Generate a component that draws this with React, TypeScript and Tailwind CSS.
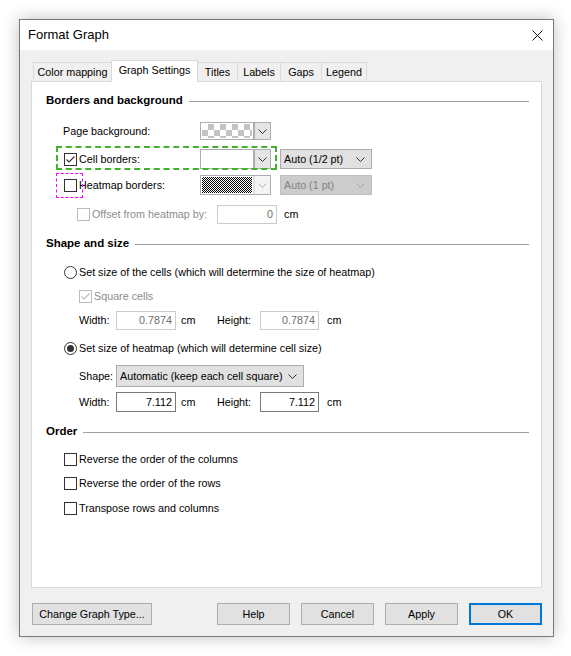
import React from 'react';

function Chevron({ color = '#333' }: { color?: string }) {
  return (
    <svg width="9" height="5" viewBox="0 0 9 5" fill="none">
      <path d="M0.5 0.5 L4.5 4.5 L8.5 0.5" stroke={color} strokeWidth="1" />
    </svg>
  );
}

function Checkbox({ checked = false, disabled = false }: { checked?: boolean; disabled?: boolean }) {
  const line = disabled ? '#bcbcbc' : '#333';
  return (
    <span
      className={`flex w-[13px] h-[13px] shrink-0 items-center justify-center border bg-white ${
        disabled ? 'border-[#bcbcbc]' : 'border-[#333]'
      }`}
    >
      {checked && (
        <svg width="11" height="11" viewBox="0 0 11 11" fill="none">
          <path d="M1.5 5.5 L4 8 L9.5 2.5" stroke={line} strokeWidth="1.1" />
        </svg>
      )}
    </span>
  );
}

function Radio({ checked = false }: { checked?: boolean }) {
  return (
    <span className="flex w-[13px] h-[13px] shrink-0 items-center justify-center rounded-full border border-[#333] bg-white">
      {checked && <span className="w-[7px] h-[7px] rounded-full bg-[#333]" />}
    </span>
  );
}

function Heading({ title, h }: { title: string; h: string }) {
  return (
    <div className={`flex items-center pl-[14px] pr-[12px] ${h}`}>
      <span className="font-bold text-[11.5px]">{title}</span>
      <span className="ml-[6px] flex-1 h-px bg-[#a0a0a0]" />
    </div>
  );
}

function Select({ label, width, height, disabled = false }: { label: string; width: string; height: string; disabled?: boolean }) {
  return (
    <div
      className={`flex items-center justify-between border pl-[3px] pr-[6px] ${width} ${height} ${
        disabled ? 'bg-[#cccccc] border-[#bfbfbf] text-[#838383]' : 'bg-[#e1e1e1] border-[#adadad]'
      }`}
    >
      <span>{label}</span>
      <Chevron color={disabled ? '#a6a6a6' : '#333'} />
    </div>
  );
}

function ColorDrop({ swatch, height, disabled = false }: { swatch: string; height: string; disabled?: boolean }) {
  return (
    <div className={`flex w-[71px] border border-[#adadad] bg-white ${height}`}>
      <div className={`flex-1 m-px ${swatch}`} />
      <div
        className={`flex w-[17px] items-center justify-center border-l-2 ${
          disabled ? 'border-[#e0e0e0] bg-[#f4f4f4]' : 'border-[#adadad] bg-[#e5e5e5]'
        }`}
      >
        <Chevron color={disabled ? '#b0b0b0' : '#333'} />
      </div>
    </div>
  );
}

function Field({ value, width, height, disabled = false }: { value: string; width: string; height: string; disabled?: boolean }) {
  return (
    <div
      className={`flex items-center justify-end border bg-white pr-[3px] ${width} ${height} ${
        disabled ? 'border-[#cccccc] text-[#6d6d6d]' : 'border-[#7a7a7a]'
      }`}
    >
      {value}
    </div>
  );
}

function SizeRow({ value, h, disabled }: { value: string; h: string; disabled: boolean }) {
  const fh = disabled ? 'h-[19px]' : 'h-[20px]';
  return (
    <div className={`flex items-center pl-[47px] ${h}`}>
      <span className="w-[37px]">Width:</span>
      <Field value={value} width="w-[60px]" height={fh} disabled={disabled} />
      <span className="ml-[5px] w-[36px]">cm</span>
      <span className="w-[43px]">Height:</span>
      <Field value={value} width="w-[59px]" height={fh} disabled={disabled} />
      <span className="ml-[8px]">cm</span>
    </div>
  );
}

function Button({ label, width, primary = false }: { label: string; width: string; primary?: boolean }) {
  return (
    <div
      className={`flex h-[22px] items-center justify-center bg-[#e1e1e1] ${width} ${
        primary ? 'border-2 border-[#0078d7]' : 'border border-[#adadad]'
      }`}
    >
      {label}
    </div>
  );
}

const tabs = [
  { label: 'Color mapping', w: 'w-[79px]' },
  { label: 'Graph Settings', w: 'w-[87px]', active: true },
  { label: 'Titles', w: 'w-[41px]' },
  { label: 'Labels', w: 'w-[44px]' },
  { label: 'Gaps', w: 'w-[42px]' },
  { label: 'Legend', w: 'w-[46px]' },
];

export default function App() {
  return (
    <div className="w-[571px] h-[656px] bg-white pt-[19px] pl-[19px] text-[10.75px] text-black font-['Liberation_Sans',Arial,sans-serif]">
      <div className="flex flex-col w-[535px] h-[618px] border border-[#787878] bg-[#f0f0f0] shadow-[0_0_16px_rgba(0,0,0,0.25)]">
        <div className="flex h-[30px] items-center justify-between bg-white pl-[8px] pr-[10px]">
          <span className="text-[13px]">Format Graph</span>
          <svg width="11" height="11" viewBox="0 0 11 11" fill="none">
            <path d="M0.5 0.5 L10.5 10.5 M10.5 0.5 L0.5 10.5" stroke="#111" strokeWidth="1" />
          </svg>
        </div>

        <div className="px-[11px] pt-[10px]">
          <div className="flex h-[21px] items-end pl-[2px]">
            {tabs.map((t, i) => (
              <div
                key={t.label}
                className={`flex items-center justify-center border-x border-t border-[#d9d9d9] ${t.w} ${
                  i > 0 ? '-ml-px' : ''
                } ${t.active ? 'relative z-10 h-[22px] -mb-px bg-white pb-[3px]' : 'h-[19px] bg-[#f0f0f0]'}`}
              >
                {t.label}
              </div>
            ))}
          </div>

          <div className="relative h-[507px] border border-[#d9d9d9] bg-white">
            <Heading title="Borders and background" h="h-[38px]" />

            <div className="flex h-[22px] items-center pl-[31px]">
              <span className="w-[137px]">Page background:</span>
              <ColorDrop
                height="h-[18px]"
                swatch="bg-[repeating-conic-gradient(#c3c3c3_0_25%,#ffffff_0_50%)] bg-[length:12px_12px]"
              />
            </div>

            <div className="flex h-[34px] items-center pl-[32px]">
              <Checkbox checked />
              <span className="ml-[2px] w-[121px]">Cell borders:</span>
              <ColorDrop height="h-[20px]" swatch="bg-white" />
              <div className="ml-[9px]">
                <Select label="Auto (1/2 pt)" width="w-[92px]" height="h-[20px]" />
              </div>
            </div>

            <div className="flex h-[18px] items-center pl-[32px]">
              <Checkbox />
              <span className="ml-[2px] w-[121px]">Heatmap borders:</span>
              <ColorDrop
                height="h-[20px]"
                disabled
                swatch="bg-[repeating-conic-gradient(#000000_0_25%,#ffffff_0_50%)] bg-[length:2px_2px]"
              />
              <div className="ml-[9px]">
                <Select label="Auto (1 pt)" width="w-[92px]" height="h-[20px]" disabled />
              </div>
            </div>

            <div className="flex h-[40px] items-center pl-[45px]">
              <Checkbox disabled />
              <span className="ml-[2px] w-[125px] text-[#8d8d8d]">Offset from heatmap by:</span>
              <Field value="0" width="w-[60px]" height="h-[19px]" disabled />
              <span className="ml-[7px]">cm</span>
            </div>

            <Heading title="Shape and size" h="h-[20px]" />

            <div className="flex h-[36px] items-center pl-[32px]">
              <Radio />
              <span className="ml-[2px]">Set size of the cells (which will determine the size of heatmap)</span>
            </div>

            <div className="flex h-[12px] items-center pl-[47px]">
              <Checkbox checked disabled />
              <span className="ml-[2px] text-[#8d8d8d]">Square cells</span>
            </div>

            <SizeRow value="0.7874" h="h-[36px]" disabled />

            <div className="flex h-[20px] items-center pl-[32px]">
              <Radio checked />
              <span className="ml-[2px]">Set size of heatmap (which will determine cell size)</span>
            </div>

            <div className="flex h-[36px] items-center pl-[47px]">
              <span className="w-[37px]">Shape:</span>
              <Select label="Automatic (keep each cell square)" width="w-[188px]" height="h-[22px]" />
            </div>

            <SizeRow value="7.112" h="h-[16px]" disabled={false} />

            <Heading title="Order" h="h-[44px]" />

            {[
              { label: 'Reverse the order of the columns', h: 'h-[10px]' },
              { label: 'Reverse the order of the rows', h: 'h-[38px]' },
              { label: 'Transpose rows and columns', h: 'h-[12px]' },
            ].map((r) => (
              <div key={r.label} className={`flex items-center pl-[32px] ${r.h}`}>
                <Checkbox />
                <span className="ml-[2px]">{r.label}</span>
              </div>
            ))}

            <div className="absolute left-[24px] top-[64px] w-[221px] h-[24px] border-2 border-dashed border-[#42b22c]" />
            <div className="absolute left-[24px] top-[91px] w-[27px] h-[25px] border border-dashed border-[#ff00ff]" />
          </div>

          <div className="flex items-center pt-[15px] pl-px">
            <Button label="Change Graph Type..." width="w-[120px]" />
            <div className="ml-auto flex gap-[11px]">
              <Button label="Help" width="w-[73px]" />
              <Button label="Cancel" width="w-[73px]" />
              <Button label="Apply" width="w-[73px]" />
              <Button label="OK" width="w-[73px]" primary />
            </div>
          </div>
        </div>
      </div>
    </div>
  );
}
